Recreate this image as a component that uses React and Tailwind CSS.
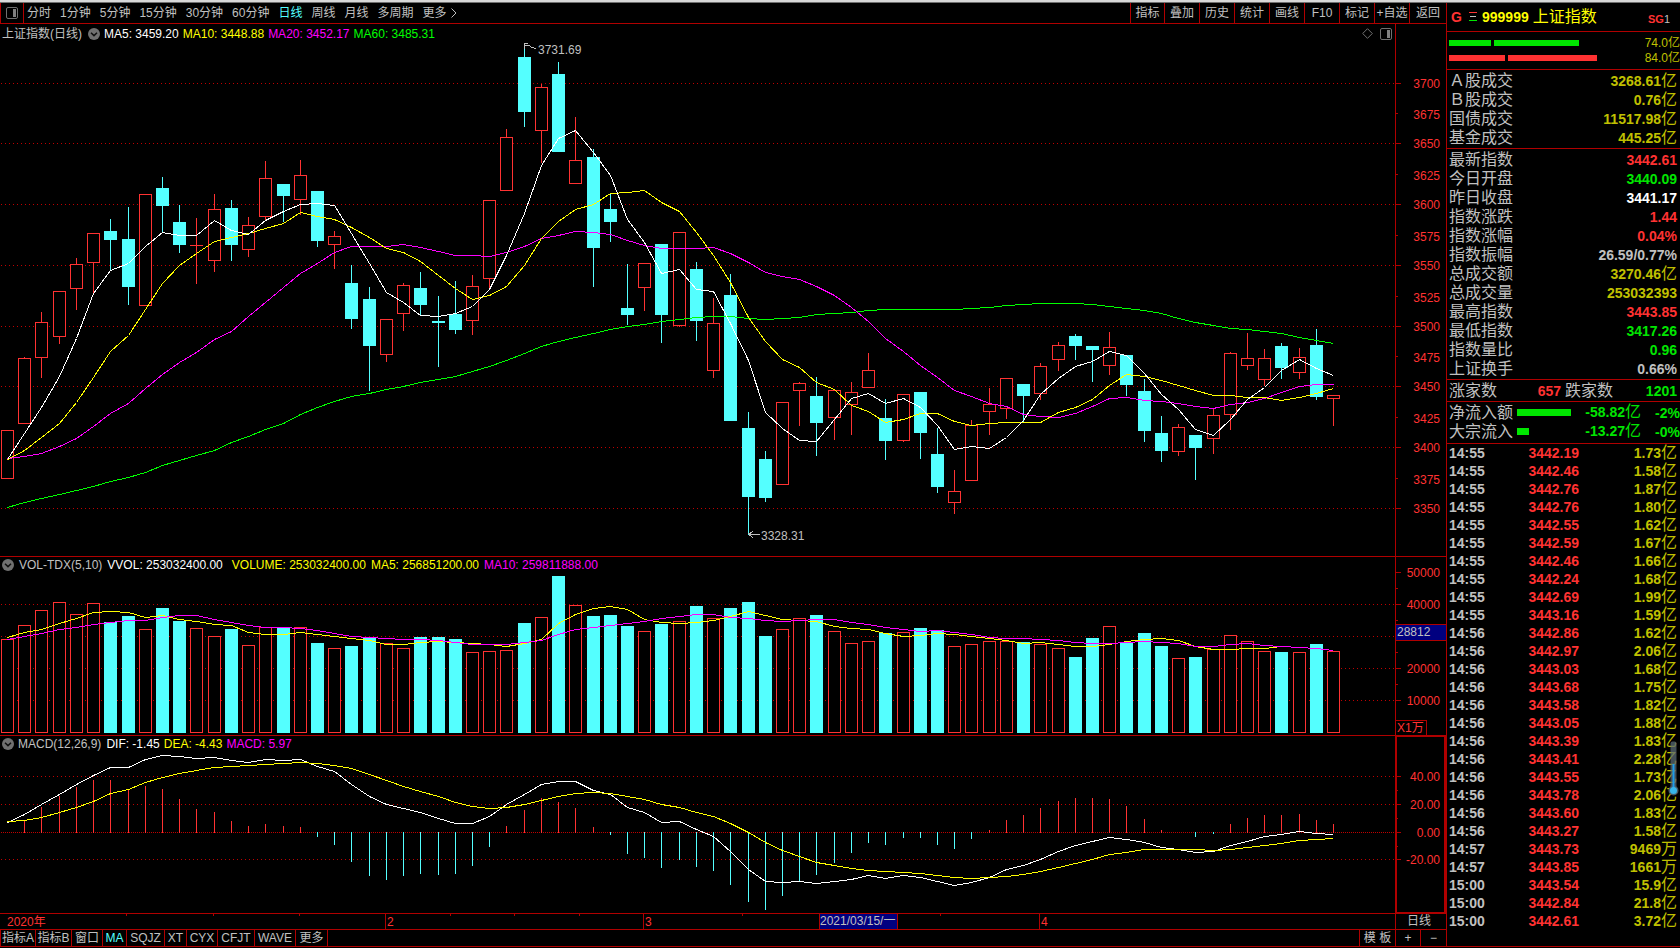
import React from "react";

const STEP = 17.222;
const left = (i) => 1 + Math.round(STEP * i);
const mid = (i) => left(i) + 6.5;

// kind, high, open/close top, open/close bottom, low
const CANDLES = [
  ["r", 430, 430, 478, 478], ["r", 357, 358, 423, 423], ["r", 312, 322, 357, 378], ["r", 291, 291, 336, 344],
  ["r", 258, 264, 288, 310], ["r", 233, 233, 262, 293], ["c", 219, 231, 240, 271], ["c", 207, 239, 287, 305],
  ["r", 194, 194, 305, 305], ["c", 177, 188, 206, 233], ["c", 205, 222, 245, 253], ["r", 218, 245, 245, 284],
  ["r", 194, 209, 260, 272], ["c", 200, 208, 245, 261], ["r", 217, 225, 249, 257], ["r", 161, 178, 216, 220],
  ["c", 184, 184, 196, 222], ["r", 160, 175, 199, 215], ["c", 191, 191, 241, 247], ["r", 231, 236, 244, 269],
  ["c", 265, 283, 319, 329], ["c", 287, 299, 346, 391], ["r", 319, 319, 354, 362], ["r", 283, 285, 313, 331],
  ["c", 272, 288, 305, 316], ["c", 296, 321, 323, 367], ["c", 281, 314, 330, 334], ["r", 275, 286, 320, 335],
  ["r", 200, 200, 278, 290], ["r", 129, 137, 190, 190], ["c", 44, 57, 112, 127], ["r", 84, 87, 130, 163],
  ["c", 62, 74, 152, 152], ["r", 117, 160, 183, 183], ["c", 149, 157, 248, 287], ["c", 194, 209, 222, 242],
  ["c", 264, 308, 315, 325], ["r", 263, 263, 287, 311], ["c", 244, 244, 315, 343], ["r", 232, 232, 325, 327],
  ["c", 262, 269, 321, 341], ["r", 298, 323, 370, 378], ["c", 274, 295, 421, 421], ["c", 412, 428, 497, 535],
  ["c", 451, 459, 498, 502], ["r", 402, 402, 484, 484], ["r", 382, 383, 390, 426], ["c", 377, 396, 423, 456],
  ["r", 390, 390, 417, 440], ["r", 382, 392, 404, 435], ["r", 353, 370, 387, 387], ["c", 399, 418, 441, 460],
  ["r", 394, 394, 440, 442], ["c", 392, 392, 433, 459], ["c", 428, 454, 487, 493], ["r", 470, 491, 502, 514],
  ["r", 420, 425, 480, 480], ["r", 388, 404, 411, 435], ["r", 378, 378, 408, 419], ["c", 384, 384, 396, 422],
  ["r", 363, 366, 393, 400], ["r", 342, 345, 359, 371], ["c", 334, 336, 346, 360], ["c", 346, 346, 350, 382],
  ["r", 332, 347, 365, 375], ["c", 355, 355, 385, 396], ["c", 379, 391, 431, 442], ["c", 416, 433, 451, 462],
  ["r", 424, 427, 451, 456], ["c", 435, 435, 448, 480], ["r", 409, 415, 438, 454], ["r", 352, 353, 414, 430],
  ["r", 333, 358, 365, 370], ["r", 349, 358, 379, 386], ["c", 343, 346, 368, 379], ["r", 348, 357, 372, 379],
  ["c", 329, 345, 397, 400], ["r", 395, 395, 398, 426],
];

const MA5 = [459, 433, 407, 376, 338, 293, 270, 263, 246, 232, 235, 235, 220, 230, 234, 220, 211, 204, 203, 205, 233, 263, 292, 302, 315, 316, 313, 306, 289, 255, 213, 165, 138, 130, 152, 175, 219, 242, 273, 269, 289, 291, 323, 360, 412, 428, 440, 441, 419, 398, 393, 403, 398, 407, 425, 449, 446, 448, 437, 420, 394, 378, 366, 361, 351, 355, 373, 394, 409, 429, 435, 419, 399, 387, 370, 359, 368, 375];
const MA10 = [459, 450, 437, 423, 402, 377, 351, 335, 309, 283, 265, 253, 241, 237, 233, 228, 223, 212, 216, 219, 227, 237, 248, 252, 261, 275, 288, 299, 295, 286, 265, 238, 221, 209, 204, 193, 192, 190, 202, 211, 232, 255, 282, 317, 341, 359, 367, 382, 389, 405, 411, 422, 419, 413, 413, 421, 425, 423, 422, 422, 422, 412, 407, 399, 385, 374, 376, 380, 385, 390, 395, 395, 397, 397, 400, 397, 393, 388];
const MA20 = [458, 456, 453, 446, 438, 426, 413, 403, 388, 374, 362, 352, 339, 331, 316, 302, 287, 273, 263, 252, 246, 246, 246, 244, 247, 251, 255, 255, 256, 252, 246, 238, 235, 231, 232, 234, 240, 245, 248, 248, 248, 247, 253, 262, 272, 276, 279, 286, 295, 307, 321, 338, 351, 365, 377, 390, 396, 403, 406, 414, 416, 417, 413, 406, 398, 397, 400, 401, 403, 406, 408, 404, 402, 398, 392, 386, 384, 384];
const MA60 = [507, 502, 498, 494, 490, 486, 481, 477, 472, 465, 460, 455, 450, 442, 436, 429, 423, 414, 407, 401, 396, 393, 389, 386, 382, 379, 376, 371, 366, 360, 353, 346, 341, 337, 333, 329, 326, 324, 321, 319, 317, 316, 316, 318, 319, 318, 317, 314, 313, 312, 310, 309, 309, 309, 309, 309, 308, 307, 305, 304, 303, 303, 303, 304, 306, 308, 310, 313, 318, 322, 325, 328, 329, 331, 333, 337, 340, 343];

const VOLUMES = [639, 625, 610, 602, 614, 603, 622, 616, 629, 608, 621, 628, 636, 629, 645, 627, 628, 627, 643, 648, 646, 638, 643, 648, 637, 637, 639, 652, 651, 650, 623, 617, 576, 605, 616, 615, 626, 631, 624, 621, 606, 618, 608, 602, 636, 629, 618, 615, 631, 643, 641, 633, 632, 628, 630, 646, 644, 641, 641, 642, 644, 648, 657, 638, 626, 643, 633, 646, 658, 657, 649, 635, 641, 651, 652, 652, 644, 651];
const VMA5 = [637, 632, 629, 623, 618, 612, 611, 612, 617, 615, 619, 621, 624, 625, 632, 634, 634, 632, 634, 636, 638, 640, 644, 644, 642, 641, 642, 643, 644, 646, 643, 639, 623, 614, 608, 606, 609, 619, 622, 623, 622, 620, 616, 611, 615, 619, 620, 621, 626, 628, 629, 633, 636, 635, 633, 634, 636, 638, 640, 643, 642, 644, 646, 646, 644, 641, 639, 638, 640, 646, 649, 649, 648, 648, 646, 647, 648, 650];
const VMA10 = [639, 636, 633, 629, 627, 624, 622, 620, 620, 617, 615, 615, 619, 622, 625, 627, 627, 628, 630, 633, 636, 637, 638, 639, 639, 640, 642, 644, 644, 644, 642, 640, 634, 629, 627, 625, 623, 621, 618, 616, 614, 614, 617, 618, 620, 621, 620, 619, 619, 622, 624, 627, 629, 631, 630, 632, 634, 637, 638, 638, 639, 640, 642, 643, 643, 642, 641, 642, 643, 646, 646, 644, 643, 645, 646, 647, 648, 650];

const HIST = [832, 820, 807, 796, 787, 780, 780, 790, 786, 789, 799, 809, 812, 821, 826, 824, 826, 827, 837, 845, 862, 876, 880, 876, 874, 875, 874, 866, 847, 826, 810, 798, 802, 808, 827, 835, 854, 858, 868, 860, 867, 871, 885, 902, 910, 896, 881, 875, 863, 853, 843, 845, 838, 838, 845, 849, 839, 830, 820, 815, 808, 801, 798, 798, 799, 806, 819, 830, 832, 837, 834, 824, 818, 815, 815, 814, 820, 824];
const DIF = [822, 814, 804, 794, 784, 775, 767, 767, 759, 755, 756, 758, 757, 760, 762, 759, 760, 759, 766, 771, 784, 796, 804, 808, 812, 818, 823, 823, 816, 804, 794, 784, 781, 781, 790, 794, 807, 812, 822, 821, 829, 836, 851, 869, 881, 882, 881, 883, 881, 879, 875, 878, 875, 877, 881, 885, 882, 877, 869, 865, 859, 851, 845, 841, 837, 839, 842, 847, 849, 852, 851, 845, 841, 836, 834, 831, 833, 834];
const DEA = [821, 820, 817, 812, 807, 801, 793, 789, 782, 777, 773, 770, 767, 766, 765, 764, 763, 762, 763, 765, 768, 774, 780, 786, 791, 796, 802, 806, 808, 807, 804, 800, 796, 793, 792, 793, 796, 799, 804, 807, 812, 816, 823, 832, 842, 850, 856, 862, 865, 868, 870, 871, 872, 873, 875, 877, 878, 877, 876, 874, 871, 867, 863, 859, 854, 852, 849, 849, 849, 849, 850, 849, 847, 845, 843, 840, 839, 838];

function Line({ data, color }) {
  return (
    <polyline
      fill="none"
      stroke={color}
      strokeWidth="1"
      points={data.map((y, i) => `${mid(i)},${y + 0.5}`).join(" ")}
    />
  );
}

function Grid({ rows, dash = "1 3" }) {
  return rows.map((y) => (
    <line key={y} x1="1" x2="1395" y1={y + 0.5} y2={y + 0.5} stroke="#c00000" strokeDasharray={dash} />
  ));
}

function Chart({ top, height, label, className, children }) {
  return (
    <svg
      className={`block w-full ${className}`}
      viewBox={`0 ${top} 1395 ${height}`}
      preserveAspectRatio="none"
      shapeRendering="crispEdges"
      role="img"
      aria-label={label}
    >
      {children}
    </svg>
  );
}

function Axis({ top, height, labels, ticks, minor, className, shift = 0 }) {
  return (
    <svg className={`block w-[50px] ${className}`} viewBox={`${shift} ${top} 50 ${height}`} shapeRendering="crispEdges">
      {ticks.map((y) => (
        <line key={y} x1="0" x2="5" y1={y + 0.5} y2={y + 0.5} stroke="#b00000" />
      ))}
      {minor.map((y) => (
        <line key={y} x1="0" x2="2" y1={y + 0.5} y2={y + 0.5} stroke="#b00000" />
      ))}
      {labels.map(([y, t]) => (
        <text key={t} x="44" y={y + 5} textAnchor="end" fill="#ff3232" fontSize="12">
          {t}
        </text>
      ))}
    </svg>
  );
}

function Fold({ label }) {
  return (
    <button type="button" aria-label={label} className="flex size-3 shrink-0 items-center justify-center rounded-full bg-[#707070]">
      <svg width="8" height="8" viewBox="0 0 8 8" fill="none" stroke="#101010" strokeWidth="1.5">
        <path d="M1 2.8 4 5.6 7 2.8" />
      </svg>
    </button>
  );
}

function SidebarIcon({ size = 12 }) {
  return (
    <svg width={size} height={size} viewBox="0 0 12 12">
      <rect x="0.5" y="0.5" width="11" height="11" rx="1.5" fill="none" stroke="#707070" />
      <rect x="7" y="2" width="3" height="8" fill="#808080" />
    </svg>
  );
}

const PERIODS = ["分时", "1分钟", "5分钟", "15分钟", "30分钟", "60分钟", "日线", "周线", "月线", "多周期"];
const TOOLS = [
  ["指标", "w-[34px]"],
  ["叠加", "w-[35px]"],
  ["历史", "w-[35px]"],
  ["统计", "w-[35px]"],
  ["画线", "w-[35px]"],
  ["F10", "w-[35px]"],
  ["标记", "w-[35px]"],
  ["+自选", "w-[35px]"],
  ["返回", "w-[37px]"],
];

const TURNOVER = [
  ["Ａ股成交", "3268.61"],
  ["Ｂ股成交", "0.76"],
  ["国债成交", "11517.98"],
  ["基金成交", "445.25"],
];

const RED = "text-[#ff3232]";
const GREEN = "text-[#00e600]";
const GOLD = "text-[#c0c000]";
const GRAY = "text-[#c0c0c0]";

const STATS = [
  ["最新指数", "3442.61", "", RED],
  ["今日开盘", "3440.09", "", GREEN],
  ["昨日收盘", "3441.17", "", "text-white"],
  ["指数涨跌", "1.44", "", RED],
  ["指数涨幅", "0.04%", "", RED],
  ["指数振幅", "26.59/0.77%", "", GRAY],
  ["总成交额", "3270.46", "亿", GOLD],
  ["总成交量", "253032393", "", GOLD],
  ["最高指数", "3443.85", "", RED],
  ["最低指数", "3417.26", "", GREEN],
  ["指数量比", "0.96", "", GREEN],
  ["上证换手", "0.66%", "", GRAY],
];

const TRADES = [
  ["14:55", "3442.19", "1.73", "亿"], ["14:55", "3442.46", "1.58", "亿"], ["14:55", "3442.76", "1.87", "亿"],
  ["14:55", "3442.76", "1.80", "亿"], ["14:55", "3442.55", "1.62", "亿"], ["14:55", "3442.59", "1.67", "亿"],
  ["14:55", "3442.46", "1.66", "亿"], ["14:55", "3442.24", "1.68", "亿"], ["14:55", "3442.69", "1.99", "亿"],
  ["14:55", "3443.16", "1.59", "亿"], ["14:56", "3442.86", "1.62", "亿"], ["14:56", "3442.97", "2.06", "亿"],
  ["14:56", "3443.03", "1.68", "亿"], ["14:56", "3443.68", "1.75", "亿"], ["14:56", "3443.58", "1.82", "亿"],
  ["14:56", "3443.05", "1.88", "亿"], ["14:56", "3443.39", "1.83", "亿"], ["14:56", "3443.41", "2.28", "亿"],
  ["14:56", "3443.55", "1.73", "亿"], ["14:56", "3443.78", "2.06", "亿"], ["14:56", "3443.60", "1.83", "亿"],
  ["14:56", "3443.27", "1.58", "亿"], ["14:57", "3443.73", "9469", "万"], ["14:57", "3443.85", "1661", "万"],
  ["15:00", "3443.54", "15.9", "亿"], ["15:00", "3442.84", "21.8", "亿"], ["15:00", "3442.61", "3.72", "亿"],
];

const TABS = [
  ["指标A", "w-[35px]"],
  ["指标B", "w-9"],
  ["窗口", "w-[31px]"],
  ["MA", "w-6"],
  ["SQJZ", "w-[38px]"],
  ["XT", "w-[22px]"],
  ["CYX", "w-[31px]"],
  ["CFJT", "w-[37px]"],
  ["WAVE", "w-[41px]"],
  ["更多", "w-8"],
];

function PricePane() {
  return (
    <section className="flex border-b border-[#b00000]">
      <div className="relative min-w-0 flex-1">
        <header className="flex h-[19px] items-center gap-1 pl-[2px] pr-[3px]">
          <span className="mr-[2px]">上证指数(日线)</span>
          <Fold label="收起主图指标" />
          <span className="text-white">MA5: 3459.20</span>
          <span className="text-[#ffff00]">MA10: 3448.88</span>
          <span className="text-[#ff00ff]">MA20: 3452.17</span>
          <span className="text-[#00ff00]">MA60: 3485.31</span>
          <button type="button" aria-label="标记" className="ml-auto mr-[3px]">
            <svg width="11" height="11" viewBox="0 0 11 11" fill="none" stroke="#707070">
              <path d="M5.5 .7 10.3 5.5 5.5 10.3 .7 5.5Z" />
            </svg>
          </button>
          <button type="button" aria-label="侧栏">
            <SidebarIcon />
          </button>
        </header>
        <Chart top={43} height={513} className="h-[513px]" label="日K线">
          <Grid rows={[83, 143, 204, 265, 326, 386, 447, 508]} />
          {CANDLES.map(([k, hi, a, b, lo], i) => {
            const x = left(i);
            const color = k === "r" ? "#ff3232" : "#54ffff";
            return (
              <g key={i}>
                <line x1={x + 6.5} x2={x + 6.5} y1={hi} y2={lo} stroke={color} />
                {a === b ? (
                  <line x1={x} x2={x + 13} y1={a + 0.5} y2={a + 0.5} stroke={color} />
                ) : k === "r" ? (
                  <rect x={x + 0.5} y={a + 0.5} width="12" height={b - a} fill="#000" stroke={color} />
                ) : (
                  <rect x={x} y={a} width="13" height={b - a} fill={color} />
                )}
              </g>
            );
          })}
          <Line data={MA60} color="#00ff00" />
          <Line data={MA20} color="#ff00ff" />
          <Line data={MA10} color="#ffff00" />
          <Line data={MA5} color="#ffffff" />
          <g fill="none" stroke="#c0c0c0">
            <path d="M528 43.5H524.5V49M525 45.5H529L532 47.5L536 48.5" />
            <path d="M749 534.5H760M749 534.5L753 531M749 534.5L753 538M748 533.5H751" />
          </g>
        </Chart>
        <span className="absolute left-[538px] top-[18px] leading-4">3731.69</span>
        <span className="absolute left-[761px] top-[504px] leading-4">3328.31</span>
      </div>
      <div className="w-[51px] shrink-0 border-l border-[#b00000]">
        <Axis
          top={24}
          height={532}
          className="h-[532px]"
          ticks={[83, 143, 204, 265, 326, 386, 447, 508]}
          minor={[113, 174, 235, 296, 356, 417, 478]}
          labels={[
            [83, "3700"], [114, "3675"], [143, "3650"], [175, "3625"], [204, "3600"], [236, "3575"], [265, "3550"], [297, "3525"],
            [326, "3500"], [357, "3475"], [386, "3450"], [418, "3425"], [447, "3400"], [479, "3375"], [508, "3350"],
          ]}
        />
      </div>
    </section>
  );
}

function VolumePane() {
  return (
    <section className="flex border-b border-[#b00000]">
      <div className="min-w-0 flex-1">
        <header className="mb-px flex h-4 items-center gap-[5px] pl-[2px]">
          <Fold label="收起成交量" />
          <span>VOL-TDX(5,10)</span>
          <span className="mr-1 text-white">VVOL: 253032400.00</span>
          <span className="text-[#ffff00]">VOLUME: 253032400.00</span>
          <span className="text-[#ffff00]">MA5: 256851200.00</span>
          <span className="text-[#ff00ff]">MA10: 259811888.00</span>
        </header>
        <Chart top={574} height={161} className="h-[161px]" label="成交量">
          <Grid rows={[604, 636, 668, 700]} />
          {VOLUMES.map((y, i) =>
            CANDLES[i][0] === "r" ? (
              <rect key={i} x={left(i) + 0.5} y={y + 0.5} width="12" height={732 - y} fill="#000" stroke="#ff3232" />
            ) : (
              <rect key={i} x={left(i)} y={y} width="13" height={733 - y} fill="#54ffff" />
            )
          )}
          <Line data={VMA5} color="#ffff00" />
          <Line data={VMA10} color="#ff00ff" />
        </Chart>
      </div>
      <div className="relative w-[51px] shrink-0 border-l border-[#b00000]">
        <Axis
          top={557}
          height={178}
          className="h-[178px]"
          ticks={[572, 604, 668, 700]}
          minor={[588, 620, 652, 684]}
          labels={[[572, "50000"], [604, "40000"], [668, "20000"], [700, "10000"]]}
        />
        <span className="absolute left-0 top-[67px] h-[17px] w-full border-y border-[#b00000] bg-[#000080] pl-px leading-[15px]">28812</span>
        <span className="absolute bottom-0 left-0 h-[15px] w-[31px] border-r border-t border-[#b00000] pl-px leading-[14px] text-[#ff3232]">
          X1万
        </span>
      </div>
    </section>
  );
}

function MacdPane() {
  return (
    <section className="flex border-b border-[#b00000]">
      <div className="min-w-0 flex-1">
        <header className="flex h-4 items-center gap-1 pl-[2px]">
          <Fold label="收起MACD" />
          <span className="mr-px">MACD(12,26,9)</span>
          <span className="text-white">DIF: -1.45</span>
          <span className="text-[#ffff00]">DEA: -4.43</span>
          <span className="text-[#ff00ff]">MACD: 5.97</span>
        </header>
        <Chart top={752} height={161} className="h-[161px]" label="MACD">
          <Grid rows={[776, 804, 859]} />
          <Grid rows={[832]} dash="1 1" />
          {HIST.map((y, i) =>
            y === 832 ? null : (
              <line key={i} x1={mid(i)} x2={mid(i)} y1={y < 832 ? 833 : 832} y2={y} stroke={y < 832 ? "#ff3232" : "#54ffff"} />
            )
          )}
          <Line data={DIF} color="#ffffff" />
          <Line data={DEA} color="#ffff00" />
        </Chart>
      </div>
      <div className="w-[51px] shrink-0 overflow-hidden border-2 border-t border-b border-[#b00000]">
        <Axis
          top={737}
          height={175}
          shift={1}
          className="h-[175px]"
          ticks={[776, 804, 832, 859]}
          minor={[790, 818, 846]}
          labels={[[776, "40.00"], [804, "20.00"], [832, "0.00"], [859, "-20.00"]]}
        />
      </div>
    </section>
  );
}

function DateAxis() {
  return (
    <div className="flex h-4 border-b border-[#b00000] text-[#ff3232]">
      <div className="relative min-w-0 flex-1 leading-4">
        <svg className="absolute inset-0 h-full w-full" viewBox="0 0 1395 15" preserveAspectRatio="none" shapeRendering="crispEdges" stroke="#b00000">
          {[126, 213, 299, 450, 514, 579, 742, 940].map((x) => (
            <line key={x} x1={x + 0.5} x2={x + 0.5} y1="0" y2="2" />
          ))}
          {[385, 643, 1039].map((x) => (
            <line key={x} x1={x + 0.5} x2={x + 0.5} y1="0" y2="15" />
          ))}
        </svg>
        <span className="absolute left-[7px]">2020年</span>
        <span className="absolute left-[387px]">2</span>
        <span className="absolute left-[645px]">3</span>
        <span className="absolute left-[1041px]">4</span>
        <span className="absolute left-[819px] h-[15px] w-[79px] overflow-hidden whitespace-nowrap border-x border-[#b00000] bg-[#000080] leading-[15px] text-[#c0c0c0]">
          2021/03/15/一
        </span>
      </div>
      <div className="w-[51px] shrink-0 border-l border-[#b00000] pr-1 text-center leading-[15px] text-[#c0c0c0]">日线</div>
    </div>
  );
}

function Flow({ label, bar, value, pct }) {
  return (
    <div className={`flex h-[19px] items-center text-sm font-bold ${GREEN}`}>
      <span className="w-[68px] shrink-0 text-base font-normal leading-[19px] text-[#c0c0c0]">{label}</span>
      <span className={`h-[7px] shrink-0 bg-[#00e600] ${bar}`} />
      <span className="ml-auto whitespace-nowrap leading-[19px]">
        {value}
        <span className="text-base font-normal leading-none">亿</span>
      </span>
      <span className="w-[39px] shrink-0 text-right">{pct}</span>
    </div>
  );
}

function QuotePanel() {
  return (
    <aside className="relative w-[234px] shrink-0 border-l border-[#b00000]">
      <header className="flex h-[29px] items-center border-b border-[#b00000] pl-1 pr-[10px]">
        <span className={`w-[18px] text-sm font-bold ${RED}`}>G</span>
        <button type="button" aria-label="列表">
          <svg width="8" height="10" viewBox="0 0 8 10" shapeRendering="crispEdges">
            <path d="M0 .5H8" stroke="#ff3232" />
            <path d="M1 4.5H7" stroke="#c0c0c0" />
            <path d="M0 8.5H8" stroke="#00e600" />
          </svg>
        </button>
        <h1 className="ml-[5px] flex items-center gap-1 text-[#ffff00]">
          <span className="text-sm font-bold">999999</span>
          <span className="text-base font-normal">上证指数</span>
        </h1>
        <span className={`ml-auto mt-1 text-[11px] ${RED}`}>
          <b>SG</b>
          <span className="text-[#c0c0c0]">1</span>
        </span>
      </header>
      <div className={`border-b border-[#b00000] pb-1 pl-[2px] pt-[3px] ${GOLD}`}>
        <div className="flex h-[15px] items-center gap-[3px]">
          <span className="h-[6px] w-[42px] bg-[#00e600]" />
          <span className="h-[6px] w-[85px] bg-[#00e600]" />
          <span className="ml-auto">74.0亿</span>
        </div>
        <div className="flex h-[15px] items-center gap-[3px]">
          <span className="h-[6px] w-14 bg-[#ff3232]" />
          <span className="h-[6px] w-[89px] bg-[#ff3232]" />
          <span className="ml-auto">84.0亿</span>
        </div>
      </div>
      <div className="border-b border-[#b00000] py-px pl-[2px] pr-[3px]">
        <table className="w-full border-collapse">
          <tbody>
            {TURNOVER.map(([k, v]) => (
              <tr key={k} className="h-[19px]">
                <th className="p-0 text-left align-middle text-base font-normal leading-[18px]">{k}</th>
                <td className={`p-0 text-right align-middle text-sm font-bold leading-[18px] ${GOLD}`}>
                  {v}
                  <span className="text-base font-normal leading-none">亿</span>
                </td>
              </tr>
            ))}
          </tbody>
        </table>
      </div>
      <div className="border-b border-[#b00000] py-px pl-[2px] pr-[3px]">
        <table className="w-full border-collapse">
          <tbody>
            {STATS.map(([k, v, unit, color]) => (
              <tr key={k} className="h-[19px]">
                <th className="p-0 text-left align-middle text-base font-normal leading-[18px]">{k}</th>
                <td className={`p-0 text-right align-middle text-sm font-bold leading-[18px] ${color}`}>
                  {v}
                  {unit && <span className="text-base font-normal leading-none">{unit}</span>}
                </td>
              </tr>
            ))}
          </tbody>
        </table>
      </div>
      <div className="flex h-[22px] items-center border-b border-[#b00000] pl-[2px] pr-[3px] text-base">
        <span>涨家数</span>
        <span className={`ml-auto mr-1 text-sm font-bold ${RED}`}>657</span>
        <span>跌家数</span>
        <span className={`w-16 text-right text-sm font-bold ${GREEN}`}>1201</span>
      </div>
      <div className="border-b border-[#b00000] pb-[2px] pl-[2px] pt-px">
        <Flow label="净流入额" bar="w-[54px]" value="-58.82" pct="-2%" />
        <Flow label="大宗流入" bar="w-3" value="-13.27" pct="-0%" />
      </div>
      <div className="pl-[2px] pr-[3px]">
        <table className="w-full table-fixed border-collapse text-sm font-bold">
          <tbody>
            {TRADES.map(([t, p, v, unit], i) => (
              <tr key={i} className="h-[18px]">
                <td className="w-[50px] p-0 leading-[18px]">{t}</td>
                <td className={`w-20 p-0 text-right leading-[18px] ${RED}`}>{p}</td>
                <td className={`p-0 text-right leading-[18px] ${GOLD}`}>
                  {v}
                  <span className="text-base font-normal leading-none">{unit}</span>
                </td>
              </tr>
            ))}
          </tbody>
        </table>
      </div>
      <div className="absolute inset-x-0 bottom-0 h-px bg-[#b00000]" />
      <svg className="absolute right-px top-[738px]" width="11" height="56" viewBox="0 0 11 56">
        <rect x="2.5" y="0.5" width="6" height="50" rx="2" fill="#5a6a74" fillOpacity=".75" />
        <circle cx="5.5" cy="49.5" r="5" fill="#4a5a66" />
        <path d="M5.5 23V48" stroke="#1e9be8" strokeWidth="2" />
        <circle cx="5.5" cy="49.5" r="3.5" fill="#38b6ea" />
      </svg>
    </aside>
  );
}

export default function App() {
  return (
    <div className="min-h-screen bg-black font-['Liberation_Sans','Noto_Sans_CJK_SC',sans-serif] text-xs text-[#c0c0c0]">
      <div className="h-[3px] border-b border-[#707070] bg-[#d8d8d8]" />
      <div className="flex">
        <main className="min-w-0 flex-1">
          <nav className="flex h-[21px] items-stretch border-b border-[#b00000]">
            <button type="button" aria-label="切换侧栏" className="flex w-6 items-center justify-center border-x border-[#b00000]">
              <SidebarIcon />
            </button>
            <div className="ml-[3px] flex items-center gap-[9px] whitespace-nowrap">
              {PERIODS.map((p) => (
                <button key={p} type="button" className={p === "日线" ? "text-[#54ffff]" : ""}>
                  {p}
                </button>
              ))}
              <button type="button" className="flex items-center gap-1">
                更多
                <svg width="6" height="10" viewBox="0 0 6 10" fill="none" stroke="#c0c0c0">
                  <path d="M.5 .5 5 5 .5 9.5" />
                </svg>
              </button>
            </div>
            <div className="ml-auto flex whitespace-nowrap">
              {TOOLS.map(([t, w]) => (
                <button key={t} type="button" className={`border-l border-[#b00000] text-center ${w}`}>
                  {t}
                </button>
              ))}
            </div>
          </nav>
          <PricePane />
          <VolumePane />
          <MacdPane />
          <DateAxis />
          <footer className="flex h-[17px] border-b border-[#b00000] leading-4">
            <div className="flex border-l border-[#b00000]">
              {TABS.map(([t, w]) => (
                <button
                  key={t}
                  type="button"
                  className={`box-border whitespace-nowrap border-r border-[#b00000] text-center ${w} ${t === "MA" ? "text-[#54ffff]" : ""}`}
                >
                  {t}
                </button>
              ))}
            </div>
            <button type="button" className="ml-auto w-9 border-l border-[#b00000] text-center">
              模 板
            </button>
            <button type="button" aria-label="放大" className="w-[25px] border-l border-[#b00000]">
              +
            </button>
            <button type="button" aria-label="缩小" className="w-[26px] border-l border-[#b00000]">
              −
            </button>
          </footer>
        </main>
        <QuotePanel />
      </div>
    </div>
  );
}
